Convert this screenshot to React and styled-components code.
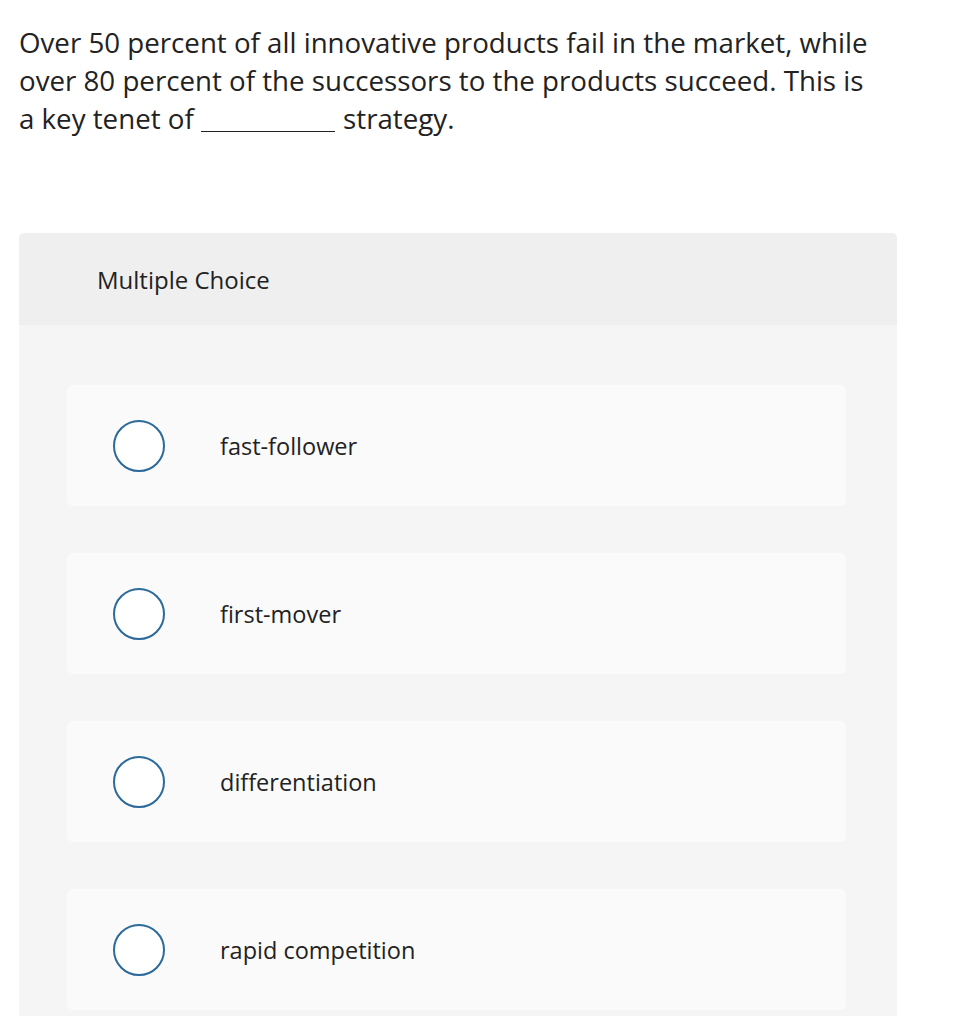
import React from "react";
import styled, { createGlobalStyle } from "styled-components";

const GlobalStyle = createGlobalStyle`
  body {
    margin: 0;
    background: #fff;
    font-family: "Open Sans", "Lato", sans-serif;
    font-variant-ligatures: none;
    color: #222;
  }
`;

const options = [
  "fast-follower",
  "first-mover",
  "differentiation",
  "rapid competition",
];

const App = () => {
  return (
    <Page>
      <GlobalStyle />
      <Question>
        Over 50 percent of all innovative products fail in the market, while
        <br />
        over 80 percent of the successors to the products succeed. This is
        <br />
        a key tenet of <Blank /> strategy.
      </Question>
      <Panel>
        <PanelHeader>Multiple Choice</PanelHeader>
        <OptionList>
          {options.map((label) => (
            <Option key={label}>
              <Radio />
              <OptionLabel>{label}</OptionLabel>
            </Option>
          ))}
        </OptionList>
      </Panel>
    </Page>
  );
};

const Page = styled.div`
  padding: 23px 0 0 19px;
  width: 878px;
`;

const Question = styled.p`
  margin: 0;
  font-size: 27.7px;
  line-height: 38px;
  color: #222;
  white-space: nowrap;
`;

const Blank = styled.span`
  display: inline-block;
  width: 134px;
  border-bottom: 1.5px solid #222;
  margin-right: 1px;
  vertical-align: -3px;
`;

const Panel = styled.section`
  margin-top: 96px;
  border-radius: 5px 5px 0 0;
  overflow: hidden;
  background: #f5f5f5;
`;

const PanelHeader = styled.div`
  height: 92px;
  display: flex;
  align-items: center;
  padding-left: 78px;
  background: #efefef;
  font-size: 24px;
  color: #222;
`;

const OptionList = styled.div`
  display: flex;
  flex-direction: column;
  gap: 47px;
  padding: 60px 51px 6px 48px;
`;

const Option = styled.div`
  height: 121px;
  display: flex;
  align-items: center;
  background: #fafafa;
  border-radius: 6px;
  padding-left: 46px;
`;

const Radio = styled.span`
  width: 48px;
  height: 48px;
  border-radius: 50%;
  border: 2px solid #2b6a9a;
  background: #fff;
  flex-shrink: 0;
`;

const OptionLabel = styled.span`
  margin-left: 55px;
  font-size: 23.5px;
  color: #222;
`;

export default App;
